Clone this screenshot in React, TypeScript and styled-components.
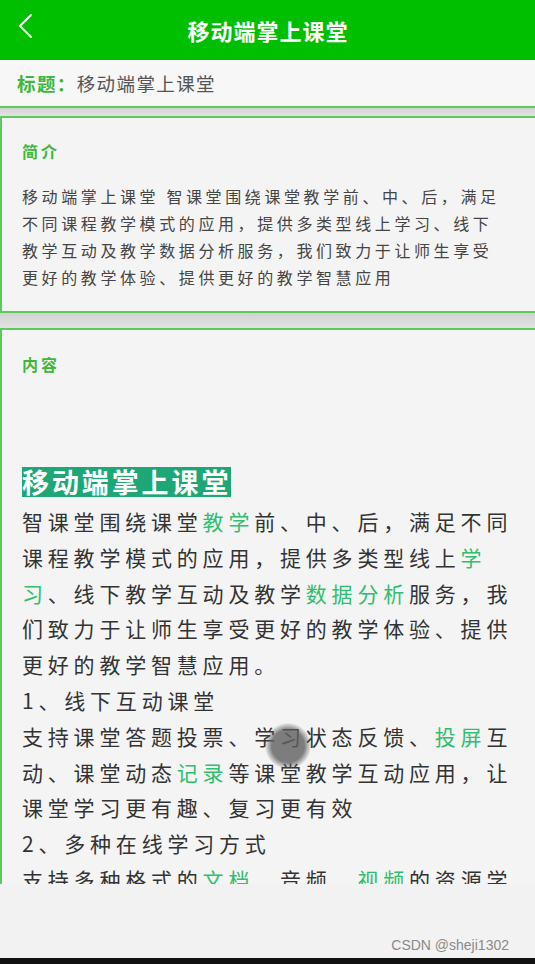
import React from 'react';
import styled, { createGlobalStyle } from 'styled-components';

const GlobalStyle = createGlobalStyle`
  html, body {
    margin : 0;
    padding : 0;
    background : #f2f2f2;
  }
  * {
    box-sizing : border-box;
  }
`;

const cjk = `"Noto Sans CJK SC", "Noto Sans", sans-serif`;

type Part = string | { hl: string };

const paragraphs: Part[][] = [
  ['智课堂围绕课堂', { hl: '教学' }, '前、中、后，满足不同课程教学模式的应用，提供多类型线上', { hl: '学习' }, '、线下教学互动及教学', { hl: '数据分析' }, '服务，我们致力于让师生享受更好的教学体验、提供更好的教学智慧应用。'],
  ['1、线下互动课堂'],
  ['支持课堂答题投票、学习状态反馈、', { hl: '投屏' }, '互动、课堂动态', { hl: '记录' }, '等课堂教学互动应用，让课堂学习更有趣、复习更有效'],
  ['2、多种在线学习方式'],
  ['支持多种格式的', { hl: '文档' }, '、音频、', { hl: '视频' }, '的资源学习，多种学习方式满足不同学习需求'],
];

const App = () => {
  return (
    <>
      <GlobalStyle />
      <Page>
        <Header>
          <BackBtn>
            <svg width="16" height="26" viewBox="0 0 16 26" fill="none">
              <polyline points="14,2 3,13 14,24" stroke="#fff" strokeWidth="2" strokeLinecap="round" strokeLinejoin="round" />
            </svg>
          </BackBtn>
          <HeaderTitle>移动端掌上课堂</HeaderTitle>
        </Header>
        <TitleRow>
          <Label>标题：</Label>
          <TitleText>移动端掌上课堂</TitleText>
        </TitleRow>
        <Gap h={8} />
        <IntroCard>
          <SectionName>简介</SectionName>
          <IntroText>移动端掌上课堂 智课堂围绕课堂教学前、中、后，满足不同课程教学模式的应用，提供多类型线上学习、线下教学互动及教学数据分析服务，我们致力于让师生享受更好的教学体验、提供更好的教学智慧应用</IntroText>
        </IntroCard>
        <Gap h={15} />
        <ContentCard>
          <SectionName>内容</SectionName>
          <Article>
            <Heading><span>移动端掌上课堂</span></Heading>
            {paragraphs.map((p, i) => (
              <Para key={i}>
                {p.map((part, j) =>
                  typeof part === 'string' ? part : <Hl key={j}>{part.hl}</Hl>
                )}
              </Para>
            ))}
          </Article>
          <Cursor />
        </ContentCard>
        <Footer>
          <Watermark>CSDN @sheji1302</Watermark>
        </Footer>
        <BottomBar />
      </Page>
    </>
  );
};

const Page = styled.div`
  width : 535px;
  height : 964px;
  display : flex;
  flex-direction : column;
  overflow : hidden;
  background : #dadada;
  font-family : ${cjk};
`;

const Header = styled.div`
  height : 60px;
  flex-shrink : 0;
  background : #00bf00;
  display : flex;
  align-items : center;
  justify-content : center;
  position : relative;
`;

const BackBtn = styled.div`
  position : absolute;
  left : 17px;
  top : 13px;
  display : flex;
`;

const HeaderTitle = styled.h1`
  margin : 0;
  color : #fff;
  font-size : 22px;
  font-weight : 700;
  letter-spacing : 1px;
  padding-left : 1px;
`;

const TitleRow = styled.div`
  height : 48px;
  flex-shrink : 0;
  background : #f7f7f7;
  border-bottom : 2px solid #5cc95c;
  display : flex;
  align-items : center;
  padding : 0 17px 0;
  font-size : 18.5px;
  letter-spacing : 1.4px;
`;

const Label = styled.span`
  color : #3db83d;
  font-weight : 700;
`;

const TitleText = styled.span`
  color : #555;
`;

const Gap = styled.div<{ h: number }>`
  height : ${p => p.h}px;
  flex-shrink : 0;
  background : linear-gradient(#d2d2d2, #e2e2e2);
`;

const IntroCard = styled.div`
  flex-shrink : 0;
  background : #f4f4f4;
  border : 2px solid #5cc95c;
  border-right : none;
  padding : 21px 28px 20px 20px;
`;

const SectionName = styled.div`
  color : #3db83d;
  font-size : 16px;
  font-weight : 700;
  letter-spacing : 3px;
  line-height : 24px;
`;

const IntroText = styled.p`
  margin : 20px 0 0;
  color : #454545;
  font-size : 16px;
  line-height : 27px;
  letter-spacing : 3.6px;
`;

const ContentCard = styled.div`
  height : 556px;
  flex-shrink : 0;
  background : #f4f4f4;
  border-top : 2px solid #5cc95c;
  border-left : 2px solid #5cc95c;
  padding : 22px 20px 0 20px;
  overflow : hidden;
  position : relative;
`;

const Article = styled.div`
  margin-top : 91px;
  color : #333;
  font-size : 21px;
  letter-spacing : 4.8px;
`;

const Heading = styled.div`
  line-height : 30px;
  margin-bottom : 5px;
  span {
    display : inline-block;
    background : #1ea776;
    color : #fff;
    font-size : 27px;
    font-weight : 700;
    letter-spacing : 2.9px;
    line-height : 30px;
  }
`;

const Para = styled.p`
  margin : 0;
  line-height : 35.8px;
`;

const Hl = styled.span`
  color : #2fbf6f;
`;

const Cursor = styled.div`
  position : absolute;
  left : 263px;
  top : 393px;
  width : 46px;
  height : 46px;
  border-radius : 50%;
  background : radial-gradient(circle, rgba(95,95,95,0.8) 50%, rgba(95,95,95,0) 72%);
`;

const Footer = styled.div`
  flex : 1;
  background : #f2f2f2;
  display : flex;
  align-items : flex-end;
  justify-content : flex-end;
  padding : 0 26px 5px 0;
`;

const Watermark = styled.span`
  font-family : "Liberation Sans", Arial, sans-serif;
  font-size : 14px;
  color : #8a8a8a;
`;

const BottomBar = styled.div`
  height : 6px;
  flex-shrink : 0;
  background : #111;
`;

export default App;
